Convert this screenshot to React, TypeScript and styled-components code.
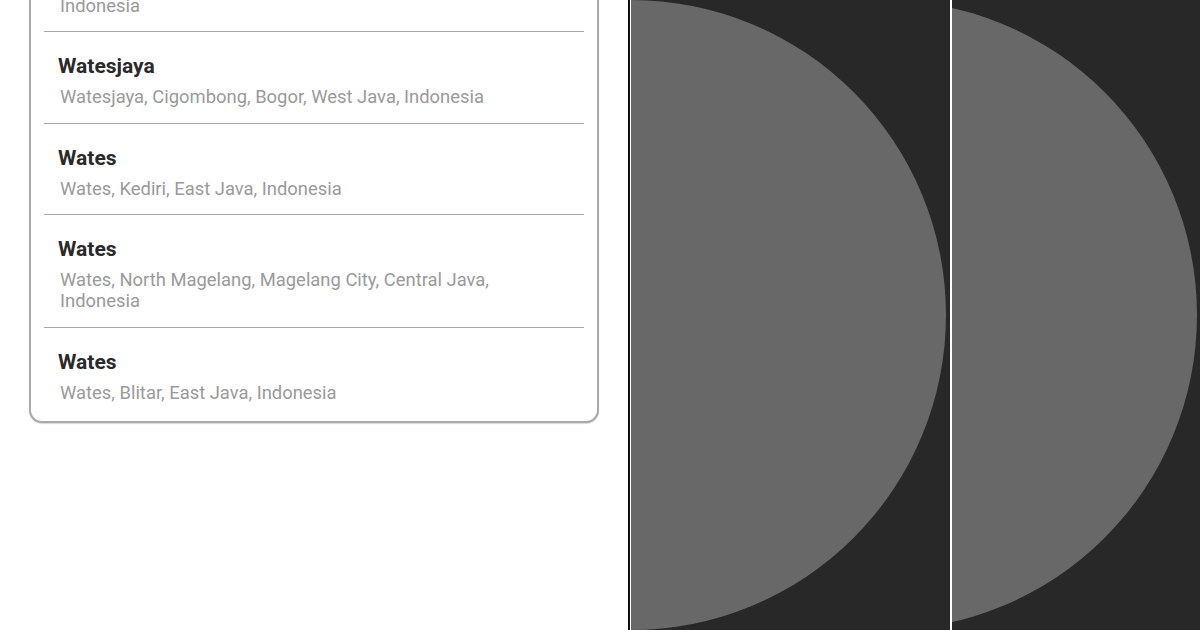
import React from 'react'
import styled, { createGlobalStyle } from 'styled-components'

const GlobalStyle = createGlobalStyle`
  html, body {
    margin: 0;
    padding: 0;
    background: #ffffff;
    overflow: hidden;
  }
  body {
    font-family: Roboto, "Liberation Sans", Arial, sans-serif;
  }
`

const Page = styled.div`
  display: flex;
  width: 1200px;
  height: 630px;
  overflow: hidden;
`

const ListColumn = styled.div`
  width: 628px;
  flex-shrink: 0;
  border-right: 2px solid #111111;
  box-sizing: content-box;
`

const ResultsCard = styled.div`
  margin: -82.5px 0 0 29px;
  width: 570px;
  box-sizing: border-box;
  border: 2px solid #a9a9a9;
  border-radius: 0 0 13px 13px;
  background: #ffffff;
  padding: 0 13px;
  box-shadow: 0 1px 1px rgba(0, 0, 0, 0.15);
`

const Row = styled.div<{ last?: boolean }>`
  padding: 22px 24px ${({ last }) => (last ? '18px' : '15.5px')} 14px;
  border-bottom: ${({ last }) => (last ? 'none' : '1px solid #a8a8a8')};
`

const Title = styled.div`
  font-size: 21px;
  line-height: 24px;
  height: 24px;
  font-weight: 700;
  color: #2a2a2a;
  margin-bottom: 8px;
`

const Subtitle = styled.div`
  font-size: 18.4px;
  line-height: 21px;
  color: #9a9a9a;
  padding-left: 2px;
`

const Slides = styled.div`
  flex: 1;
  display: flex;
  gap: 2px;
  padding-left: 1px;
  background: #ffffff;
`

const Slide = styled.div<{ width: number }>`
  width: ${({ width }) => width}px;
  flex-shrink: 0;
  height: 630px;
  background: #282828;
  overflow: hidden;
`

const places = [
  { name: 'Wates', detail: 'Wates, Kulon Progo Regency, Special Region of Yogyakarta, Indonesia' },
  { name: 'Watesjaya', detail: 'Watesjaya, Cigombong, Bogor, West Java, Indonesia' },
  { name: 'Wates', detail: 'Wates, Kediri, East Java, Indonesia' },
  { name: 'Wates', detail: 'Wates, North Magelang, Magelang City, Central Java, Indonesia' },
  { name: 'Wates', detail: 'Wates, Blitar, East Java, Indonesia' },
]

const Disc = ({ width, cx }: { width: number; cx: number }) => (
  <svg width={width} height={630} viewBox={`0 0 ${width} 630`}>
    <circle cx={cx} cy={315} r={315} fill="#686868" />
  </svg>
)

const App = () => {
  return (
    <>
      <GlobalStyle />
      <Page>
        <ListColumn>
          <ResultsCard>
            {places.map((p, i) => (
              <Row key={i} last={i === places.length - 1}>
                <Title>{p.name}</Title>
                <Subtitle>{p.detail}</Subtitle>
              </Row>
            ))}
          </ResultsCard>
        </ListColumn>
        <Slides>
          <Slide width={319}>
            <Disc width={319} cx={0} />
          </Slide>
          <Slide width={248}>
            <Disc width={248} cx={-70} />
          </Slide>
        </Slides>
      </Page>
    </>
  )
}

export default App
